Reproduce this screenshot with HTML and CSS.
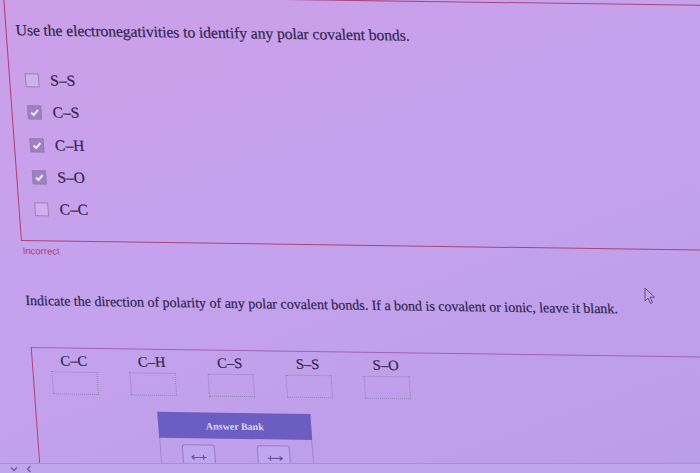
FILE: index.html
```
<!DOCTYPE html>
<html>
<head>
<meta charset="utf-8">
<link rel="stylesheet" href="styles.css">
</head>
<body>
<div class="screen">
  <div class="page">
    <section class="q1">
      <p class="prompt">Use the electronegativities to identify any polar covalent bonds.</p>
      <ul class="options">
        <li><span class="cb"></span><span class="opt">S–S</span></li>
        <li><span class="cb checked"><svg viewBox="0 0 14 14" width="14" height="14"><path d="M3.5 7.2 L6 9.6 L10.6 4.6" fill="none" stroke="#ece4f6" stroke-width="2"/></svg></span><span class="opt">C–S</span></li>
        <li><span class="cb checked"><svg viewBox="0 0 14 14" width="14" height="14"><path d="M3.5 7.2 L6 9.6 L10.6 4.6" fill="none" stroke="#ece4f6" stroke-width="2"/></svg></span><span class="opt">C–H</span></li>
        <li><span class="cb checked"><svg viewBox="0 0 14 14" width="14" height="14"><path d="M3.5 7.2 L6 9.6 L10.6 4.6" fill="none" stroke="#ece4f6" stroke-width="2"/></svg></span><span class="opt">S–O</span></li>
        <li><span class="cb"></span><span class="opt">C–C</span></li>
      </ul>
    </section>
    <div class="status">Incorrect</div>
    <p class="prompt2">Indicate the direction of polarity of any polar covalent bonds. If a bond is covalent or ionic, leave it blank.</p>
    <section class="q2">
      <div class="targets">
        <div class="target"><span class="tlabel">C–C</span><span class="drop"></span></div>
        <div class="target"><span class="tlabel">C–H</span><span class="drop"></span></div>
        <div class="target"><span class="tlabel">C–S</span><span class="drop"></span></div>
        <div class="target"><span class="tlabel">S–S</span><span class="drop"></span></div>
        <div class="target"><span class="tlabel">S–O</span><span class="drop"></span></div>
      </div>
      <div class="bank">
        <div class="bank-head">Answer Bank</div>
        <div class="tiles">
          <span class="tile"><svg viewBox="0 0 20 10" width="20" height="10"><path d="M2 5 H17 M14 2.5 V7.5 M2 5 L5 3 M2 5 L5 7" fill="none" stroke="#5a4c86" stroke-width="1"/></svg></span>
          <span class="tile"><svg viewBox="0 0 20 10" width="20" height="10"><path d="M3 5 H18 M6 2.5 V7.5 M18 5 L15 3 M18 5 L15 7" fill="none" stroke="#5a4c86" stroke-width="1"/></svg></span>
        </div>
      </div>
    </section>
  </div>
  <svg class="cursor" viewBox="0 0 12 18" width="12" height="18"><path d="M1 1 L1 14 L4 11 L6.5 16.5 L8.5 15.5 L6 10.2 L10.5 10.2 Z" fill="#c7a6f0" stroke="#5d4f86" stroke-width="1"/></svg>
</div>
<div class="bottombar">
  <svg class="bb-icon" viewBox="0 0 8 6" width="8" height="6"><path d="M1 1.5 L4 4.5 L7 1.5" fill="none" stroke="#6f5c9c" stroke-width="1.3"/></svg>
  <svg class="bb-icon" viewBox="0 0 6 8" width="6" height="8"><path d="M4.5 1 L1.5 4 L4.5 7" fill="none" stroke="#6f5c9c" stroke-width="1.3"/></svg>
</div>
</body>
</html>
```
FILE: styles.css
```
html, body {
  margin: 0;
  padding: 0;
}
body {
  width: 700px;
  height: 473px;
  overflow: hidden;
  background: linear-gradient(160deg, #cc9fe8 0%, #c5a2ee 45%, #ba9de8 100%);
  font-family: "Liberation Serif", "Times New Roman", serif;
  color: #30254f;
  display: flex;
  flex-direction: column;
}
.screen {
  position: relative;
  height: 463px;
  overflow: hidden;
  flex: none;
}
.page {
  width: 780px;
  padding-left: 3px;
  transform: matrix(1, 0.014, 0.073, 1, 0, 0);
  transform-origin: 0 0;
  -webkit-text-stroke: 0.2px #30254f;
}
.q1 {
  border-left: 1.5px solid #b23c72;
  border-top: 1.5px solid #a8457a;
  border-bottom: 1.5px solid #a8467a;
  margin: -5px 0 0 0;
  box-sizing: border-box;
  height: 246px;
}
.prompt {
  margin: 0;
  padding: 25px 0 0 9px;
  font-size: 15.7px;
  line-height: 17px;
  letter-spacing: -0.1px;
}
.options {
  list-style: none;
  margin: 26px 0 0 0;
  padding: 0 0 0 15px;
}
.options li {
  display: flex;
  align-items: center;
  height: 32.3px;
  gap: 11px;
}
.cb {
  width: 14px;
  height: 14px;
  box-sizing: border-box;
  border: 1px solid #9a7db8;
  background: #d0b0f0;
  display: block;
}
.cb.checked {
  background: #9c83c0;
  border-color: #957bb8;
}
.cb svg {
  display: block;
  margin: -1px;
}
.opt {
  font-size: 15.5px;
  line-height: 16px;
}
.status {
  font-family: "Liberation Sans", Arial, sans-serif;
  font-size: 9.5px;
  line-height: 11px;
  color: #b04072;
  margin-top: 4px;
  padding-left: 1px;
  -webkit-text-stroke: 0;
}
.prompt2 {
  margin: 36px 0 0 0;
  font-size: 14.1px;
  line-height: 16px;
  letter-spacing: -0.05px;
}
.q2 {
  margin: 39px 0 0 2px;
  border-left: 1.5px solid #b4426f;
  border-top: 1.5px solid #a45fb8;
  height: 140px;
}
.targets {
  display: flex;
  padding: 5px 0 0 2px;
}
.target {
  width: 78px;
  display: flex;
  flex-direction: column;
  align-items: center;
  gap: 4px;
}
.tlabel {
  font-size: 14.5px;
  line-height: 14px;
}
.drop {
  width: 46px;
  height: 23px;
  box-sizing: border-box;
  border: 1.5px dotted #9482bc;
  display: block;
}
.bank {
  margin: 16px 0 0 121px;
  width: 153px;
  border-left: 1px solid #9c8ad0;
  border-right: 1px solid #9c8ad0;
  height: 80px;
  box-sizing: border-box;
}
.bank-head {
  background: #6b5dc2;
  height: 26px;
  margin: 0 -1px;
  display: flex;
  align-items: center;
  justify-content: center;
  color: #ddd5f4;
  font-size: 10px;
  font-weight: bold;
  -webkit-text-stroke: 0;
}
.tiles {
  display: flex;
  gap: 42px;
  padding: 6px 0 0 21px;
}
.tile {
  width: 33px;
  height: 26px;
  box-sizing: border-box;
  border: 1px solid #8f80c0;
  border-radius: 3px;
  background: #bfa6ef;
  display: flex;
  align-items: center;
  justify-content: center;
}
.cursor {
  position: absolute;
  left: 644px;
  top: 287px;
}
.bottombar {
  flex: 1;
  border-top: 1px solid #a98dd8;
  background: #c0a6ec;
  display: flex;
  align-items: center;
  gap: 8px;
  padding-left: 10px;
}
.bb-icon {
  display: block;
}
```
